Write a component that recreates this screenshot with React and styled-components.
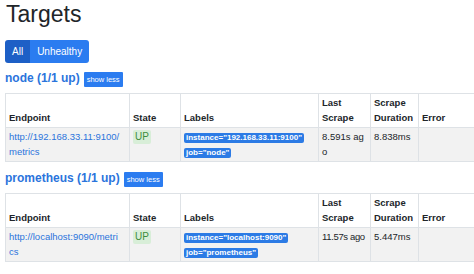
import React from "react";
import styled, { createGlobalStyle } from "styled-components";

const GlobalStyle = createGlobalStyle`
  html, body { margin: 0; padding: 0; background: #fff; overflow: hidden; }
  body {
    font-family: "Liberation Sans", Arial, Helvetica, sans-serif;
    color: #212529;
    font-size: 9.5px;
    line-height: 14.5px;
  }
  * { box-sizing: border-box; }
`;

const Page = styled.div`
  padding-left: 5px;
  width: 474px;
`;

const Title = styled.h1`
  margin: 0 0 11px 1px;
  font-size: 23px;
  line-height: 29px;
  font-weight: 400;
`;

const Toolbar = styled.div`
  display: flex;
  margin-bottom: 6px;
`;

const ButtonGroup = styled.div`
  display: flex;
`;

const FilterButton = styled.button`
  border: none;
  margin: 0;
  font-family: inherit;
  font-size: 10px;
  line-height: 15px;
  padding: 4px 7px;
  color: #fff;
  background: ${(p) => (p.$active ? "#1d5fc6" : "#2b7cf0")};
  &:first-child { border-radius: 3px 0 0 3px; }
  &:last-child { border-radius: 0 3px 3px 0; }
`;

const SectionHeader = styled.div`
  display: flex;
  align-items: baseline;
  gap: 4px;
  height: 18px;
  margin-bottom: 6px;
`;

const SectionTitle = styled.a`
  color: #2b74dc;
  font-weight: 700;
  font-size: 12px;
  line-height: 18px;
  text-decoration: none;
`;

const SmallButton = styled.button`
  border: none;
  margin: 0;
  font-family: inherit;
  font-size: 7.5px;
  line-height: 9px;
  padding: 3px 3px;
  color: #fff;
  background: #2b7cf0;
  border-radius: 1px;
`;

const Table = styled.table`
  border-collapse: collapse;
  table-layout: fixed;
  width: 469px;
  margin-bottom: 7px;
`;

const HeadCell = styled.th`
  border: 1px solid #dee2e6;
  padding: 2px 4px 2px 3px;
  text-align: left;
  vertical-align: bottom;
  font-weight: 700;
  background: #fff;
  &:last-child { border-right: none; }
`;

const Row = styled.tr`
  background: #f2f2f2;
`;

const Cell = styled.td`
  border: 1px solid #dee2e6;
  padding: 2px 4px 2px 3px;
  vertical-align: top;
  word-break: break-all;
  &:last-child { border-right: none; }
  ${(p) => p.$nowrap && "white-space: nowrap; word-break: normal; letter-spacing: -0.35px;"}
`;

const EndpointCell = styled(Cell)`
  padding-right: 7px;
`;

const EndpointLink = styled.a`
  color: #2b74dc;
  text-decoration: none;
`;

const StateBadge = styled.span`
  display: inline-block;
  background: #d8eed8;
  color: #3d8c3d;
  font-size: 10px;
  line-height: 10px;
  padding: 2px 2px;
  border-radius: 2px;
`;

const LabelBadge = styled.span`
  display: inline-block;
  background: #2c7be5;
  color: #fff;
  font-weight: 700;
  font-size: 8px;
  line-height: 8px;
  padding: 1px 2px;
  border-radius: 2px;
  margin-right: 3px;
  white-space: nowrap;
  word-break: normal;
`;

const pools = [
  {
    job: "node",
    endpoint: "http://192.168.33.11:9100/metrics",
    labels: [
      ["instance", "192.168.33.11:9100"],
      ["job", "node"],
    ],
    last: "8.591s ago",
    duration: "8.838ms",
  },
  {
    job: "prometheus",
    endpoint: "http://localhost:9090/metrics",
    labels: [
      ["instance", "localhost:9090"],
      ["job", "prometheus"],
    ],
    last: "11.57s ago",
    compact: true,
    duration: "5.447ms",
  },
];

const widths = [124, 51, 138, 52, 48, 56];

function Pool({ pool }) {
  return (
    <>
      <SectionHeader>
        <SectionTitle href="#">{pool.job} (1/1 up)</SectionTitle>
        <SmallButton>show less</SmallButton>
      </SectionHeader>
      <Table>
        <colgroup>
          {widths.map((w, i) => (
            <col key={i} style={{ width: w }} />
          ))}
        </colgroup>
        <thead>
          <tr>
            <HeadCell>Endpoint</HeadCell>
            <HeadCell>State</HeadCell>
            <HeadCell>Labels</HeadCell>
            <HeadCell>Last Scrape</HeadCell>
            <HeadCell>Scrape Duration</HeadCell>
            <HeadCell>Error</HeadCell>
          </tr>
        </thead>
        <tbody>
          <Row>
            <EndpointCell>
              <EndpointLink href="#">{pool.endpoint}</EndpointLink>
            </EndpointCell>
            <Cell>
              <StateBadge>UP</StateBadge>
            </Cell>
            <Cell>
              {pool.labels.map(([k, v]) => (
                <LabelBadge key={k}>
                  {k}="{v}"
                </LabelBadge>
              ))}
            </Cell>
            <Cell $nowrap={pool.compact}>{pool.last}</Cell>
            <Cell>{pool.duration}</Cell>
            <Cell />
          </Row>
        </tbody>
      </Table>
    </>
  );
}

export default function App() {
  return (
    <Page>
      <GlobalStyle />
      <Title>Targets</Title>
      <Toolbar>
        <ButtonGroup>
          <FilterButton $active>All</FilterButton>
          <FilterButton>Unhealthy</FilterButton>
        </ButtonGroup>
      </Toolbar>
      {pools.map((p) => (
        <Pool key={p.job} pool={p} />
      ))}
    </Page>
  );
}
